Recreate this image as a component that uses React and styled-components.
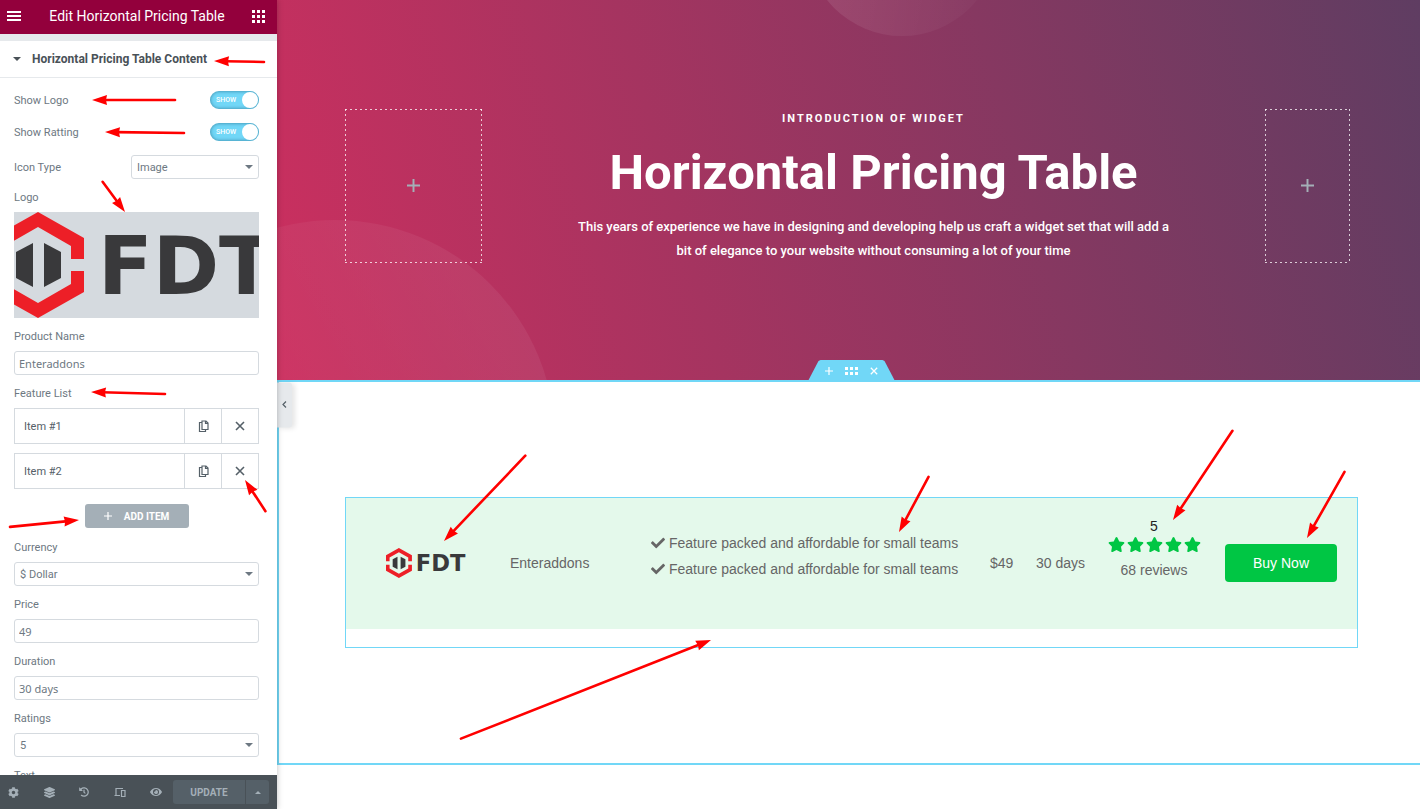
import React, { useState } from "react";
import styled, { createGlobalStyle } from "styled-components";
import { FaCog, FaLayerGroup, FaEye, FaStar, FaCheck, FaHistory } from "react-icons/fa";

const GlobalStyle = createGlobalStyle`
  * {
    box-sizing: border-box;
  }

  body {
    margin: 0;
    font-family: Roboto, "Liberation Sans", sans-serif;
    background: #fff;
  }

  button, input, select {
    font-family: inherit;
    margin: 0;
  }
`;

const Page = styled.div`
  position: relative;
  display: flex;
  height: 100vh;
  overflow: hidden;
`;

/* ---------- side panel ---------- */

const Panel = styled.aside`
  position: relative;
  z-index: 1;
  display: flex;
  flex-direction: column;
  flex: 0 0 277px;
  min-width: 0;
  background: #fff;
  color: #556068;
  font-size: 11px;
  line-height: 17px;
  box-shadow: 0 0 6px rgba(0, 0, 0, 0.25);
`;

const PanelHeader = styled.header`
  display: flex;
  align-items: center;
  justify-content: space-between;
  flex: none;
  height: 34px;
  padding: 0 12px 2px 6px;
  background: #93003c;
  color: #fff;

  h1 {
    margin: 0;
    font-size: 14px;
    font-weight: 400;
  }
`;

const IconButton = styled.button`
  display: flex;
  align-items: center;
  justify-content: center;
  padding: 0;
  border: 0;
  background: none;
  color: inherit;
  cursor: pointer;
`;

const SectionTitle = styled.button`
  display: flex;
  align-items: center;
  gap: 11px;
  flex: none;
  height: 44px;
  padding: 0 13px;
  border: 0;
  border-top: 7px solid #e6e9ec;
  border-bottom: 1px solid #e6e9ec;
  background: #fff;
  color: #495157;
  font-size: 12px;
  font-weight: 700;
`;

const Caret = styled.span`
  width: 0;
  height: 0;
  border: 4px solid transparent;
  border-top-color: currentColor;
  border-bottom: 0;
`;

const Controls = styled.form`
  flex: 1;
  min-height: 0;
  overflow: hidden;
  padding: 13px 18px 0 14px;
  color: #6d7882;
`;

const InlineRow = styled.div`
  display: flex;
  align-items: center;
  justify-content: space-between;
  margin-bottom: ${props => (props.$last ? 10 : 14)}px;
`;

const Field = styled.div`
  display: flex;
  flex-direction: column;
  gap: 6px;
  margin-bottom: 10px;
`;

const TextInput = styled.input`
  width: 100%;
  height: 24px;
  padding: 0 4px;
  border: 1px solid #d5dadf;
  border-radius: 3px;
  background: #fff;
  color: #6d7882;
  font-family: "Noto Sans", sans-serif;
  font-size: 11px;
`;

const SelectWrap = styled.div`
  display: grid;
  align-items: center;
  width: ${props => (props.$narrow ? "128px" : "100%")};

  > * {
    grid-area: 1 / 1;
  }

  ${Caret} {
    justify-self: end;
    margin-right: 6px;
    pointer-events: none;
  }
`;

const StyledSelect = styled.select`
  appearance: none;
  width: 100%;
  height: 24px;
  padding: 0 5px;
  border: 1px solid #d5dadf;
  border-radius: 3px;
  background: #fff;
  color: #6d7882;
  font-size: 11px;
`;

const Toggle = styled.label`
  display: flex;
  align-items: center;
  justify-content: space-between;
  width: 49px;
  height: 18px;
  padding: 0 1px 0 6px;
  border-radius: 9px;
  background: ${props => (props.$on ? "#71d7f7" : "#a4afb7")};
  box-shadow: inset 0 0 3px 1px rgba(0, 60, 90, 0.35);
  color: #fff;
  font-size: 7px;
  font-weight: 500;
  cursor: pointer;

  input {
    appearance: none;
    width: 16px;
    height: 16px;
    border-radius: 50%;
    background: #fff;
  }
`;

const LogoPreview = styled.div`
  height: 106px;
  overflow: hidden;
  background: #d5dadf;

  svg {
    display: block;
    height: 106px;
    width: 285px;
    margin-left: -21px;
  }
`;

const ItemList = styled.ul`
  display: flex;
  flex-direction: column;
  gap: 9px;
  margin: 0;
  padding: 0;
  list-style: none;
`;

const Item = styled.li`
  display: grid;
  grid-template-columns: 1fr 37px 37px;
  height: 36px;
  border: 1px solid #d5dadf;
  color: #556068;

  button + button {
    border-left: 1px solid #d5dadf;
  }
`;

const ItemTitle = styled.button`
  padding: 0 9px;
  border: 0;
  background: none;
  color: inherit;
  font-size: 11px;
  text-align: left;
`;

const AddButton = styled.button`
  display: flex;
  align-items: center;
  justify-content: center;
  gap: 12px;
  align-self: center;
  width: 104px;
  height: 24px;
  margin: 9px 0 1px;
  border: 0;
  border-radius: 3px;
  background: #a4afb7;
  color: #fff;
  font-size: 10px;
  font-weight: 700;
`;

const PanelFooter = styled.footer`
  display: flex;
  align-items: center;
  flex: none;
  height: 34px;
  padding-right: 8px;
  background: #495157;
  color: #a4afb7;
`;

const FooterTools = styled.div`
  display: flex;
  flex: 1;
  justify-content: space-between;
  padding: 0 11px 0 8px;
`;

const UpdateButton = styled.button`
  width: 72px;
  height: 24px;
  padding: 0;
  border: 0;
  border-radius: 3px 0 0 3px;
  background: #556068;
  color: #a4afb7;
  font-size: 10px;
  font-weight: 700;
`;

const MoreButton = styled(IconButton)`
  width: 24px;
  height: 24px;
  border-left: 1px solid #495157;
  border-radius: 0 3px 3px 0;
  background: #556068;

  ${Caret} {
    border-width: 3px;
    border-bottom: 0;
    transform: rotate(180deg);
  }
`;

/* ---------- page preview ---------- */

const Preview = styled.main`
  position: relative;
  flex: 1;
  min-width: 0;
`;

const Hero = styled.section`
  position: relative;
  display: grid;
  grid-template-columns: 137fr 783fr 85fr;
  padding: 109px 70px 117px 68px;
  overflow: hidden;
  background: linear-gradient(74deg, #cc2f5f, #5f3d62);
  color: #fff;
  text-align: center;
`;

const Circle = styled.span`
  position: absolute;
  top: ${props => props.$top}px;
  left: ${props => props.$left}px;
  width: ${props => props.$size}px;
  height: ${props => props.$size}px;
  border-radius: 50%;
  background: linear-gradient(${props => props.$angle}deg, ${props => props.$fill});
`;

const dash = angle => `repeating-linear-gradient(${angle}, rgba(255, 255, 255, 0.75) 0 2px, transparent 2px 5px)`;

const EmptyColumn = styled.button`
  position: relative;
  display: flex;
  align-items: center;
  justify-content: center;
  padding: 0 0 2px;
  border: 0;
  background:
    ${dash("90deg")} top / 100% 1px no-repeat,
    ${dash("90deg")} bottom / 100% 1px no-repeat,
    ${dash("180deg")} left / 1px 100% no-repeat,
    ${dash("180deg")} right / 1px 100% no-repeat;
  color: #a4afb7;
`;

const HeroText = styled.div`
  position: relative;
  display: flex;
  flex-direction: column;
  align-items: center;

  small {
    font-size: 11px;
    font-weight: 700;
    line-height: 19px;
    letter-spacing: 2px;
    text-transform: uppercase;
  }

  h2 {
    margin: 15px 0 12px;
    font-size: 49px;
    font-weight: 700;
    line-height: 60px;
  }

  p {
    max-width: 604px;
    margin: 0;
    font-size: 13px;
    font-weight: 500;
    line-height: 24px;
  }
`;

const EditSection = styled.section`
  position: relative;
  padding: 115px 62px 115px 66px;
  border: 2px solid #71d7f7;
  border-right: 0;
`;

const SectionHandle = styled.div`
  position: absolute;
  bottom: 100%;
  left: 66px;
  right: 62px;
  display: flex;
  align-items: center;
  justify-content: center;
  gap: 12px;
  width: 88px;
  height: 22px;
  margin: 0 auto;
  background: #71d7f7;
  color: #fff;
  clip-path: polygon(13px 0, 75px 0, 77px 1px, 88px 100%, 0 100%, 11px 1px);
`;

const CollapseTab = styled(IconButton)`
  position: absolute;
  top: 50%;
  left: 0;
  width: 15px;
  height: 45px;
  transform: translateY(-50%);
  border-radius: 0 3px 3px 0;
  background: #e6e9ec;
  box-shadow: 3px 1px 5px rgba(0, 0, 0, 0.1);
  color: #556068;
`;

const Widget = styled.div`
  padding-bottom: 18px;
  border: 1px solid #71d7f7;
`;

const PriceRow = styled.div`
  display: grid;
  grid-template-columns: 81px minmax(0, 1fr) 317px 24px 50px 92px 115px;
  align-items: center;
  gap: 22px;
  min-height: 131px;
  padding: 0 20px 2px 40px;
  background: #e4f9eb;
  color: #666;
  font-family: "Liberation Sans", Arial, sans-serif;
  font-size: 14px;
  line-height: 26px;
  white-space: nowrap;

  > svg {
    width: 81px;
    height: 30px;
  }
`;

const ProductName = styled.div`
  padding-left: 21px;
`;

const Features = styled.ul`
  margin: 0 0 14px;
  padding: 0;
  list-style: none;

  li {
    display: flex;
    align-items: center;
    gap: 4px;
  }
`;

const Rating = styled.div`
  display: flex;
  flex-direction: column;
  align-items: center;
  margin-bottom: 25px;

  strong {
    color: #222;
    font-weight: 400;
    line-height: 18px;
  }
`;

const Stars = styled.div`
  display: flex;
  gap: 2px;
  padding: 1px 0 4px;
  color: #00c644;
`;

const BuyButton = styled.a`
  margin-left: 3px;
  border-radius: 4px;
  background: #00c644;
  color: #fff;
  line-height: 38px;
  text-align: center;
  text-decoration: none;
`;

const ArrowLayer = styled.svg`
  position: absolute;
  inset: 0;
  z-index: 2;
  width: 100%;
  height: 100%;
  pointer-events: none;
`;

/* ---------- drawings ---------- */

const Logo = () => (
  <svg viewBox="0 0 285 106" role="img" aria-label="FDT">
    <g fill="#ed1f27">
      <path d="M45 0 91 26V47H78V34L45 15 12 34V47H-1V26Z" />
      <path d="M45 106 91 80V59H78V72L45 91 12 72V59H-1V80Z" />
    </g>
    <g fill="#39393b">
      <path d="M51 31 68 40V66L51 75Z" />
      <path d="M40 31 23 40V66L40 75Z" />
      <text x="105" y="82" fontFamily="DejaVu Sans, sans-serif" fontWeight="700" fontSize="80">
        FDT
      </text>
    </g>
  </svg>
);

const MenuIcon = () => (
  <svg width="16" height="12" viewBox="0 0 16 12" fill="currentColor">
    <path d="M1 1h14v2H1zM1 5h14v2H1zM1 9h14v2H1z" />
  </svg>
);

const DotsIcon = ({ rows, size = 3, gap = 2 }) => {
  const step = size + gap;
  const cells = [];
  for (let y = 0; y < rows; y++) {
    for (let x = 0; x < 3; x++) {
      cells.push(<rect key={`${x}-${y}`} x={x * step} y={y * step} width={size} height={size} />);
    }
  }
  return (
    <svg width={3 * step - gap} height={rows * step - gap} fill="currentColor">
      {cells}
    </svg>
  );
};

const CopyIcon = () => (
  <svg width="11" height="12" viewBox="0 0 11 12" fill="none" stroke="currentColor" strokeWidth="1.200">
    <path d="M4 1h4l2 2v6.500H4zM7.500 1v2.500H10M4 2.500H1.500v9H7.500V9.500" />
  </svg>
);

const CrossIcon = ({ size }) => (
  <svg width={size} height={size} viewBox="0 0 10 10" fill="none" stroke="currentColor" strokeWidth="1.600">
    <path d="M1 1l8 8M9 1l-8 8" />
  </svg>
);

const PlusIcon = ({ size, stroke = 1 }) => (
  <svg width={size} height={size} viewBox="0 0 10 10" fill="none" stroke="currentColor" strokeWidth={stroke}>
    <path d="M5 0v10M0 5h10" />
  </svg>
);

const DevicesIcon = () => (
  <svg width="12" height="11" viewBox="0 0 12 11" fill="none" stroke="currentColor" strokeWidth="1.200">
    <path d="M6 8.500H.5M2 8.500V1.500h7M7.500 3.500h3.500v6H7.500z" />
  </svg>
);

const ChevronIcon = () => (
  <svg width="5" height="8" viewBox="0 0 5 8" fill="none" stroke="currentColor" strokeWidth="1.200">
    <path d="M4 1 1 4l3 3" />
  </svg>
);

const arrows = [
  { from: [265, 62], to: [214, 61] },
  { from: [176, 100], to: [92, 100] },
  { from: [185, 133], to: [105, 132] },
  { from: [102, 181], to: [125, 212] },
  { from: [166, 394], to: [91, 392] },
  { from: [266, 512], to: [245, 480] },
  { from: [9, 527], to: [79, 520] },
  { from: [526, 455], to: [444, 541] },
  { from: [929, 476], to: [899, 532] },
  { from: [1233, 430], to: [1173, 520] },
  { from: [1345, 471], to: [1307, 538] },
  { from: [460, 739], to: [711, 640] }
];

const Arrow = ({ from, to }) => {
  const dx = to[0] - from[0];
  const dy = to[1] - from[1];
  const length = Math.hypot(dx, dy);
  const angle = (Math.atan2(dy, dx) * 180) / Math.PI;

  return (
    <g transform={`translate(${to[0]} ${to[1]}) rotate(${angle})`}>
      <path d={`M${1 - length} 0H-11`} stroke="#f00" strokeWidth="2.600" strokeLinecap="round" />
      <path d="M0 0-15-5-14 0-15 5Z" fill="#f00" />
    </g>
  );
};

/* ---------- controls ---------- */

const Switch = ({ id, label }) => {
  const [on, setOn] = useState(true);
  return (
    <InlineRow>
      <label htmlFor={id}>{label}</label>
      <Toggle $on={on}>
        {on ? "SHOW" : "HIDE"}
        <input id={id} type="checkbox" checked={on} onChange={() => setOn(!on)} />
      </Toggle>
    </InlineRow>
  );
};

const Select = ({ id, options, narrow }) => (
  <SelectWrap $narrow={narrow}>
    <StyledSelect id={id}>
      {options.map(option => (
        <option key={option}>{option}</option>
      ))}
    </StyledSelect>
    <Caret />
  </SelectWrap>
);

const TextField = ({ id, label, value }) => (
  <Field>
    <label htmlFor={id}>{label}</label>
    <TextInput id={id} type="text" defaultValue={value} />
  </Field>
);

const SelectField = ({ id, label, options }) => (
  <Field>
    <label htmlFor={id}>{label}</label>
    <Select id={id} options={options} />
  </Field>
);

const EditorPanel = () => (
  <Panel>
    <PanelHeader>
      <IconButton aria-label="Menu">
        <MenuIcon />
      </IconButton>
      <h1>Edit Horizontal Pricing Table</h1>
      <IconButton aria-label="Widgets">
        <DotsIcon rows={3} />
      </IconButton>
    </PanelHeader>
    <SectionTitle>
      <Caret />
      Horizontal Pricing Table Content
    </SectionTitle>
    <Controls onSubmit={e => e.preventDefault()}>
      <Switch id="show-logo" label="Show Logo" />
      <Switch id="show-rating" label="Show Ratting" />
      <InlineRow $last>
        <label htmlFor="icon-type">Icon Type</label>
        <Select id="icon-type" options={["Image", "Icon"]} narrow />
      </InlineRow>
      <Field>
        <span>Logo</span>
        <LogoPreview>
          <Logo />
        </LogoPreview>
      </Field>
      <TextField id="product-name" label="Product Name" value="Enteraddons" />
      <Field>
        <span>Feature List</span>
        <ItemList>
          {["Item #1", "Item #2"].map(item => (
            <Item key={item}>
              <ItemTitle type="button">{item}</ItemTitle>
              <IconButton type="button" aria-label={`Duplicate ${item}`}>
                <CopyIcon />
              </IconButton>
              <IconButton type="button" aria-label={`Remove ${item}`}>
                <CrossIcon size={10} />
              </IconButton>
            </Item>
          ))}
        </ItemList>
        <AddButton type="button">
          <PlusIcon size={8} stroke={1.5} />
          ADD ITEM
        </AddButton>
      </Field>
      <SelectField id="currency" label="Currency" options={["$ Dollar", "€ Euro"]} />
      <TextField id="price" label="Price" value="49" />
      <TextField id="duration" label="Duration" value="30 days" />
      <SelectField id="ratings" label="Ratings" options={["5", "4", "3", "2", "1"]} />
      <TextField id="text" label="Text" value="68 reviews" />
    </Controls>
    <PanelFooter>
      <FooterTools>
        <IconButton aria-label="Settings">
          <FaCog size={11} />
        </IconButton>
        <IconButton aria-label="Navigator">
          <FaLayerGroup size={11} />
        </IconButton>
        <IconButton aria-label="History">
          <FaHistory size={10} />
        </IconButton>
        <IconButton aria-label="Responsive mode">
          <DevicesIcon />
        </IconButton>
        <IconButton aria-label="Preview">
          <FaEye size={12} />
        </IconButton>
      </FooterTools>
      <UpdateButton>UPDATE</UpdateButton>
      <MoreButton aria-label="Save options">
        <Caret />
      </MoreButton>
    </PanelFooter>
  </Panel>
);

const PricingTable = () => (
  <Widget>
    <PriceRow>
      <Logo />
      <ProductName>Enteraddons</ProductName>
      <Features>
        {[1, 2].map(n => (
          <li key={n}>
            <FaCheck size={14} />
            Feature packed and affordable for small teams
          </li>
        ))}
      </Features>
      <span>$49</span>
      <span>30 days</span>
      <Rating>
        <strong>5</strong>
        <Stars>
          {[1, 2, 3, 4, 5].map(n => (
            <FaStar key={n} size={17} />
          ))}
        </Stars>
        68 reviews
      </Rating>
      <BuyButton href="#">Buy Now</BuyButton>
    </PriceRow>
  </Widget>
);

const App = () => (
  <>
    <GlobalStyle />
    <Page>
      <EditorPanel />
      <Preview>
        <Hero>
          <Circle
            $top={220}
            $left={-162}
            $size={440}
            $angle={60}
            $fill="rgba(255, 255, 255, 0), rgba(255, 255, 255, 0.07)"
          />
          <Circle
            $top={-156}
            $left={529}
            $size={192}
            $angle={100}
            $fill="rgba(255, 255, 255, 0.11), rgba(255, 255, 255, 0.01)"
          />
          <EmptyColumn aria-label="Add widget">
            <PlusIcon size={13} stroke={1.5} />
          </EmptyColumn>
          <HeroText>
            <small>Introduction of widget</small>
            <h2>Horizontal Pricing Table</h2>
            <p>
              This years of experience we have in designing and developing help us craft a widget set that will add a
              bit of elegance to your website without consuming a lot of your time
            </p>
          </HeroText>
          <EmptyColumn aria-label="Add widget">
            <PlusIcon size={13} stroke={1.5} />
          </EmptyColumn>
        </Hero>
        <EditSection>
          <SectionHandle>
            <IconButton aria-label="Add section">
              <PlusIcon size={8} stroke={1.5} />
            </IconButton>
            <IconButton aria-label="Edit section">
              <DotsIcon rows={2} />
            </IconButton>
            <IconButton aria-label="Delete section">
              <CrossIcon size={8} />
            </IconButton>
          </SectionHandle>
          <PricingTable />
        </EditSection>
        <CollapseTab aria-label="Collapse panel">
          <ChevronIcon />
        </CollapseTab>
      </Preview>
      <ArrowLayer aria-hidden="true">
        {arrows.map((arrow, i) => (
          <Arrow key={i} {...arrow} />
        ))}
      </ArrowLayer>
    </Page>
  </>
);

export default App;
